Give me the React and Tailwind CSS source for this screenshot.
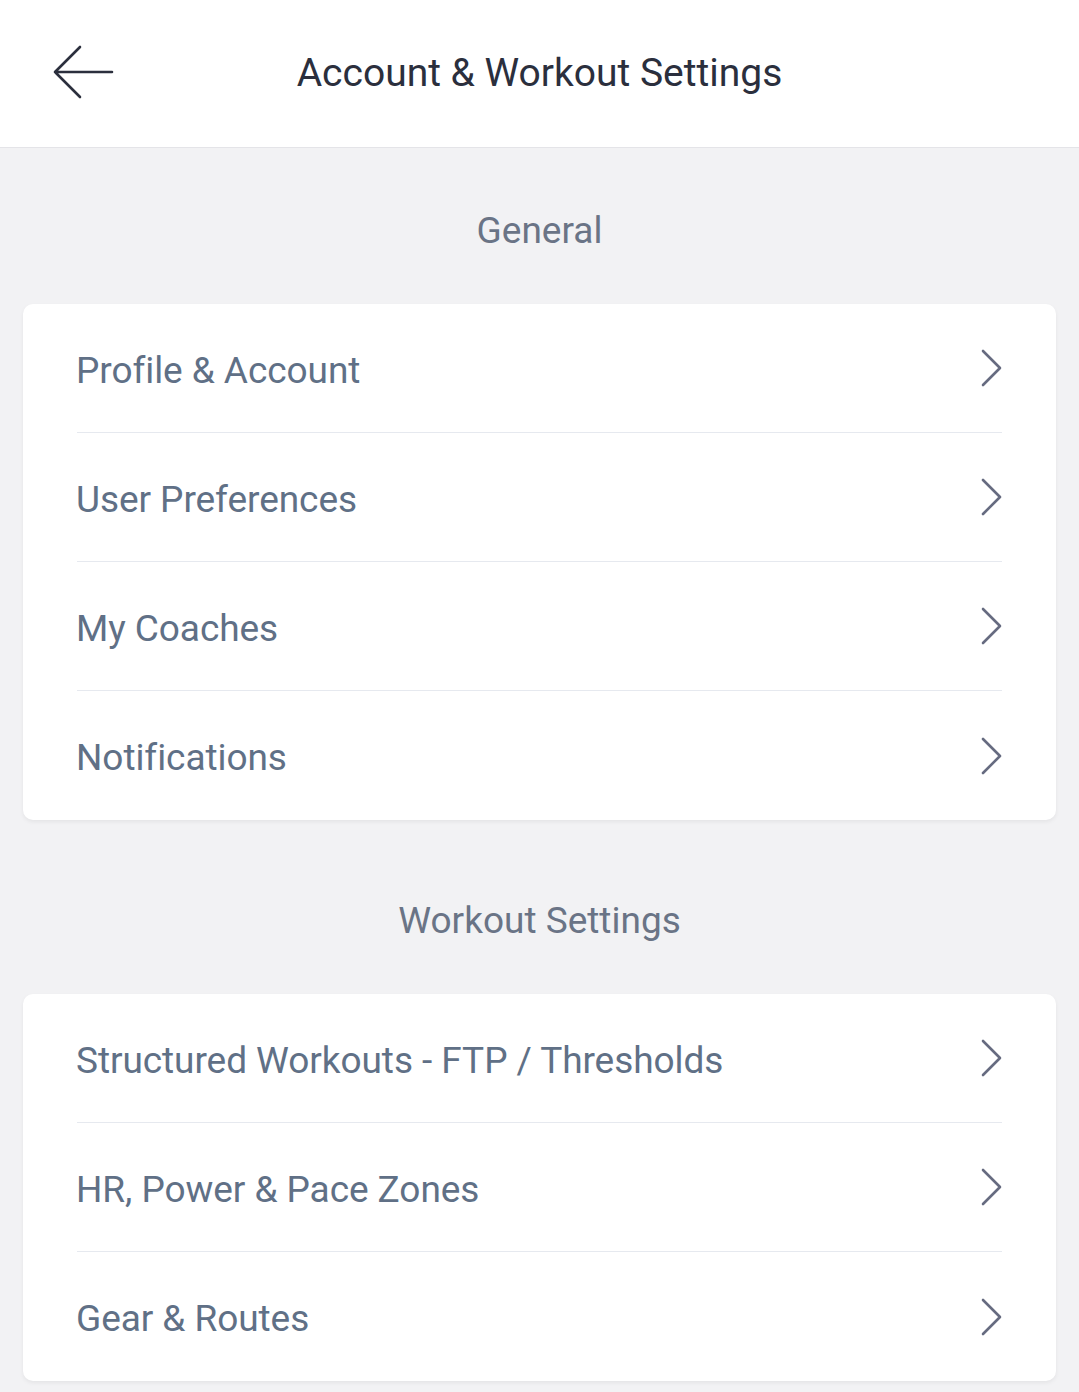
import React from 'react';

const generalItems = ['Profile & Account', 'User Preferences', 'My Coaches', 'Notifications'];
const workoutItems = ['Structured Workouts - FTP / Thresholds', 'HR, Power & Pace Zones', 'Gear & Routes'];

const Chevron = () => (
    <svg width="24" height="40" viewBox="0 0 24 40" fill="none" className="shrink-0">
        <path d="M3 3 L20 20 L3 37" stroke="#666b80" strokeWidth="2.6" strokeLinecap="round" strokeLinejoin="round" />
    </svg>
);

const Row = ({ label, last }) => (
    <div className="px-[54px]">
        <div className={`flex items-center justify-between h-[129px] ${last ? '' : 'border-b border-[#e6e9ef]'}`}>
            <span className="text-[37px] tracking-[-0.06px] text-[#607086] pt-[5px] -ml-[1px]">{label}</span>
            <div className="-mr-[2px]">
                <Chevron />
            </div>
        </div>
    </div>
);

const Card = ({ items }) => (
    <div className="mx-[23px] bg-white rounded-[10px] shadow-[0_2px_4px_rgba(0,0,0,0.06)]">
        {items.map((it, i) => (
            <Row key={it} label={it} last={i === items.length - 1} />
        ))}
    </div>
);

export default function App() {
    return (
        <div className="min-h-[1392px] bg-[#f2f2f4]" style={{ fontFamily: 'Roboto, "Liberation Sans", sans-serif' }}>
            {/* header */}
            <div className="relative h-[148px] bg-white border-b border-[#e4e4e8] flex items-center justify-center">
                <button className="absolute left-[52px] top-[44px]">
                    <svg width="62" height="58" viewBox="0 0 62 58" fill="none">
                        <path d="M28 3 L3 28 L28 53 M3 28 L60 28" stroke="#2b2f3d" strokeWidth="2.6" strokeLinecap="round" strokeLinejoin="round" />
                    </svg>
                </button>
                <h1 className="text-[39px] text-[#2b2f3d]">Account &amp; Workout Settings</h1>
            </div>

            <div className="pt-[62px] pb-[52px] text-center text-[37px] leading-[42px] text-[#6a7486]">General</div>
            <Card items={generalItems} />

            <div className="pt-[80px] pb-[52px] text-center text-[37px] leading-[42px] text-[#6a7486]">Workout Settings</div>
            <Card items={workoutItems} />
            <div className="h-[11px]" />
        </div>
    );
}
